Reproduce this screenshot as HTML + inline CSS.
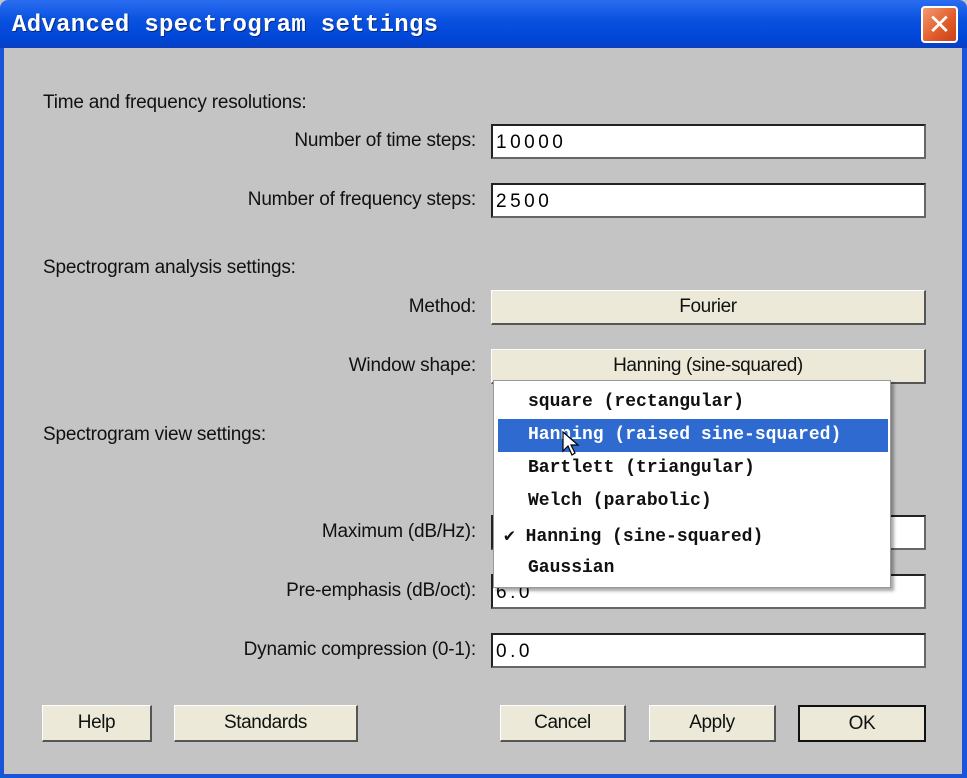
<!DOCTYPE html>
<html><head><meta charset="utf-8"><style>
*{margin:0;padding:0;box-sizing:border-box}
body{width:967px;height:778px;overflow:hidden;background:#c4c4c4;font-family:"Liberation Sans",Arial,sans-serif;position:relative}
.title{position:absolute;left:0;top:0;width:967px;height:48px;background:linear-gradient(#2a6df0 0%,#0a52e0 40%,#0046d8 80%,#0a3fc0 100%);border-radius:8px 8px 0 0}
.title span{position:absolute;left:12px;top:12px;color:#fff;font-family:"Liberation Mono",monospace;font-weight:bold;font-size:24px;letter-spacing:0.3px;text-shadow:1px 1px 0 #0a2a80}
.close{position:absolute;left:921px;top:6px;width:37px;height:37px;background:linear-gradient(135deg,#f39a70,#e05a28 60%,#c8401a);border:2px solid #fff;border-radius:4px;color:#fff;font-size:28px;text-align:center;line-height:33px}
.bl{position:absolute;left:0;top:48px;width:4px;height:730px;background:#1a55d8}
.br{position:absolute;right:0;top:48px;width:5px;height:730px;background:#1a55d8}
.bb{position:absolute;left:0;bottom:0;width:967px;height:4px;background:#1a55d8}
.lab{position:absolute;font-size:19px;color:#111;letter-spacing:-0.2px;white-space:nowrap}
.r{text-align:right;width:440px;left:36px}
.in{position:absolute;left:491px;width:435px;height:35px;background:#fff;border:2px solid #222;border-right-color:#666;border-bottom-color:#666;font-size:19px;letter-spacing:3.5px;padding:6px 0 0 3px}
.bt{position:absolute;background:#ece9d8;border:1px solid #fff;border-right:2px solid #555;border-bottom:2px solid #555;font-size:19px;letter-spacing:-0.4px;text-align:center;color:#111}
.dd{position:absolute;left:493px;top:380px;width:398px;height:208px;background:#fff;border:1px solid #999;box-shadow:3px 3px 3px rgba(0,0,0,.35)}
.it{position:absolute;left:34px;font-family:"Liberation Mono",monospace;font-weight:bold;font-size:18px;color:#111;white-space:nowrap}
.hl{position:absolute;left:4px;top:38px;width:390px;height:33px;background:#2e6ad0}
</style></head><body>
<div class="title"><span>Advanced spectrogram settings</span><div class="close">✕</div></div>
<div class="bl"></div><div class="br"></div><div class="bb"></div>

<div class="lab" style="left:43px;top:92px">Time and frequency resolutions:</div>
<div class="lab r" style="top:130px">Number of time steps:</div>
<div class="in" style="top:124px">10000</div>
<div class="lab r" style="top:189px">Number of frequency steps:</div>
<div class="in" style="top:183px">2500</div>

<div class="lab" style="left:43px;top:257px">Spectrogram analysis settings:</div>
<div class="lab r" style="top:296px">Method:</div>
<div class="bt" style="left:491px;top:290px;width:435px;height:35px;line-height:32px">Fourier</div>
<div class="lab r" style="top:355px">Window shape:</div>
<div class="bt" style="left:491px;top:349px;width:435px;height:35px;line-height:32px">Hanning (sine-squared)</div>

<div class="lab" style="left:43px;top:424px">Spectrogram view settings:</div>
<div class="lab r" style="top:521px">Maximum (dB/Hz):</div>
<div class="in" style="top:515px"></div>
<div class="lab r" style="top:580px">Pre-emphasis (dB/oct):</div>
<div class="in" style="top:574px">6.0</div>
<div class="lab r" style="top:639px">Dynamic compression (0-1):</div>
<div class="in" style="top:633px">0.0</div>

<div class="dd">
<div class="hl"></div>
<div class="it" style="top:11px">square (rectangular)</div>
<div class="it" style="top:44px;color:#fff">Hanning (raised sine-squared)</div>
<div class="it" style="top:77px">Bartlett (triangular)</div>
<div class="it" style="top:110px">Welch (parabolic)</div>
<div class="it" style="top:144px;left:10px">✔ Hanning (sine-squared)</div>
<div class="it" style="top:177px">Gaussian</div>
<svg style="position:absolute;left:68px;top:50px" width="20" height="28" viewBox="0 0 20 28"><path d="M1 1 L1 20 L6 15 L10 24 L13 22 L9 14 L16 14 Z" fill="#fff" stroke="#000" stroke-width="1.2"/></svg>
</div>

<div class="bt" style="left:42px;top:705px;width:110px;height:37px;line-height:34px">Help</div>
<div class="bt" style="left:174px;top:705px;width:184px;height:37px;line-height:34px">Standards</div>
<div class="bt" style="left:500px;top:705px;width:126px;height:37px;line-height:34px">Cancel</div>
<div class="bt" style="left:649px;top:705px;width:127px;height:37px;line-height:34px">Apply</div>
<div class="bt" style="left:798px;top:705px;width:128px;height:37px;line-height:33px;border:2px solid #111">OK</div>
</body></html>
